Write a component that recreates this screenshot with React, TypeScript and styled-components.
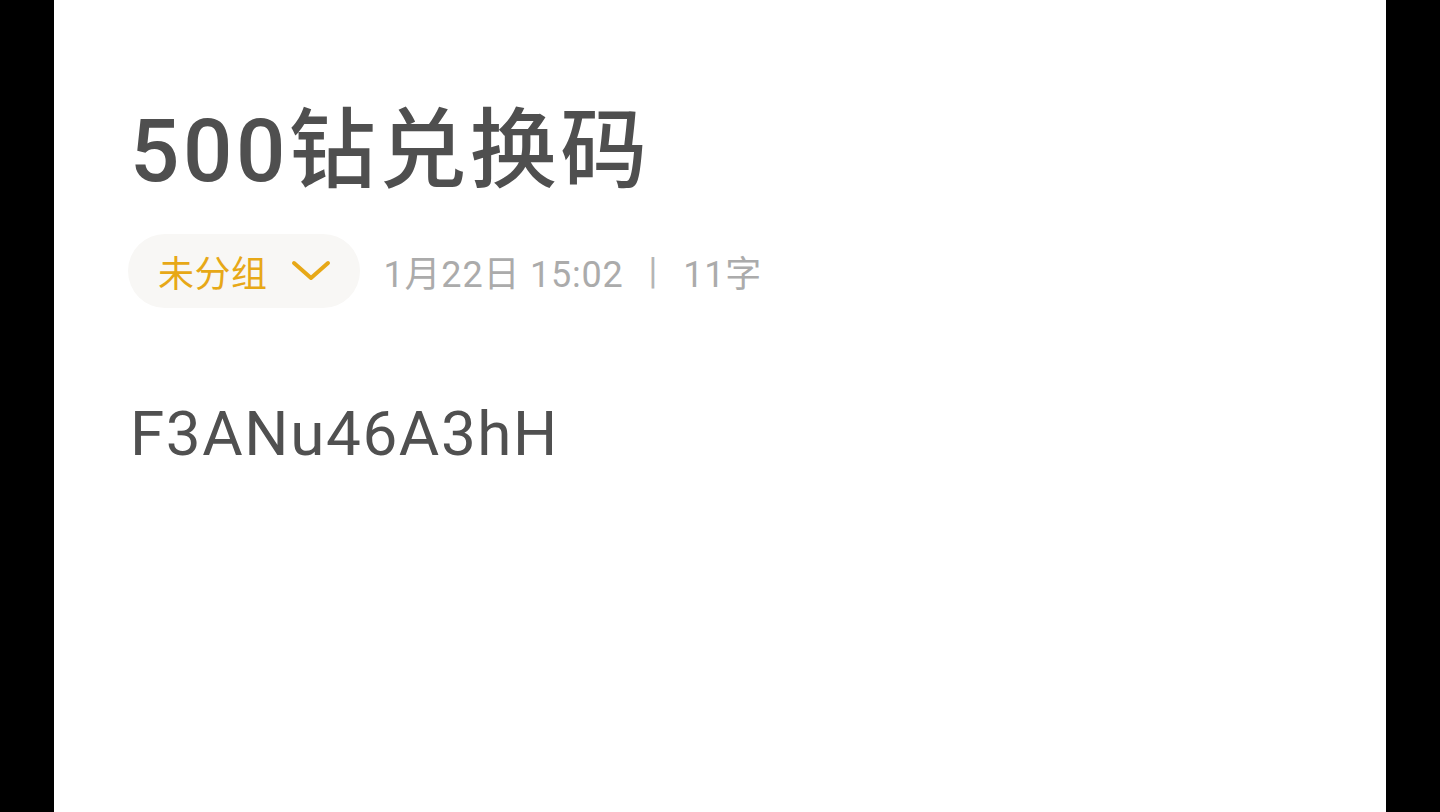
import React from 'react'
import styled, { createGlobalStyle } from 'styled-components'

const GlobalStyle = createGlobalStyle`
  html, body {
    margin: 0;
    padding: 0;
    background: #000;
  }
  #root {
    height: 812px;
  }
`

const Screen = styled.div`
  display: flex;
  justify-content: center;
  height: 812px;
  background: #000;
`

const Note = styled.main`
  width: 1332px;
  height: 100%;
  background: #fff;
  padding: 99px 0 0 76px;
  box-sizing: border-box;
  font-family: Roboto, 'Noto Sans CJK SC', sans-serif;
`

const Title = styled.h1`
  margin: 0;
  font-size: 87px;
  line-height: 104px;
  font-weight: 500;
  letter-spacing: 3.5px;
  color: #4f4f4f;
`

const MetaRow = styled.div`
  display: flex;
  align-items: center;
  gap: 24px;
  margin-top: 31px;
`

const GroupPill = styled.button`
  display: flex;
  align-items: center;
  gap: 23px;
  height: 74px;
  margin: 0 0 0 -2px;
  padding: 0 29px 0 30px;
  border: none;
  border-radius: 37px;
  background: #f8f7f5;
  color: #e7a817;
  font-family: inherit;
  font-size: 36px;
  letter-spacing: 0.5px;
  cursor: pointer;
`

const Meta = styled.span`
  display: flex;
  align-items: center;
  gap: 25px;
  font-size: 36px;
  letter-spacing: 0.8px;
  color: #ababab;
`

const Divider = styled.span`
  color: #b5b5b5;
`

const Body = styled.p`
  margin: 86px 0 0;
  font-size: 62px;
  line-height: 80px;
  font-weight: 400;
  letter-spacing: 1.6px;
  color: #505050;
`

const Chevron = () => (
  <svg width="40" height="22" viewBox="0 0 40 22" fill="none">
    <path d="M3 3 L20 18 L37 3" stroke="#e7a817" strokeWidth="4" strokeLinecap="round" strokeLinejoin="round" />
  </svg>
)

export default function App() {
  return (
    <>
      <GlobalStyle />
      <Screen>
        <Note>
          <Title>500钻兑换码</Title>
          <MetaRow>
            <GroupPill>
              未分组
              <Chevron />
            </GroupPill>
            <Meta>
              1月22日 15:02
              <Divider>|</Divider>
              11字
            </Meta>
          </MetaRow>
          <Body>F3ANu46A3hH</Body>
        </Note>
      </Screen>
    </>
  )
}
